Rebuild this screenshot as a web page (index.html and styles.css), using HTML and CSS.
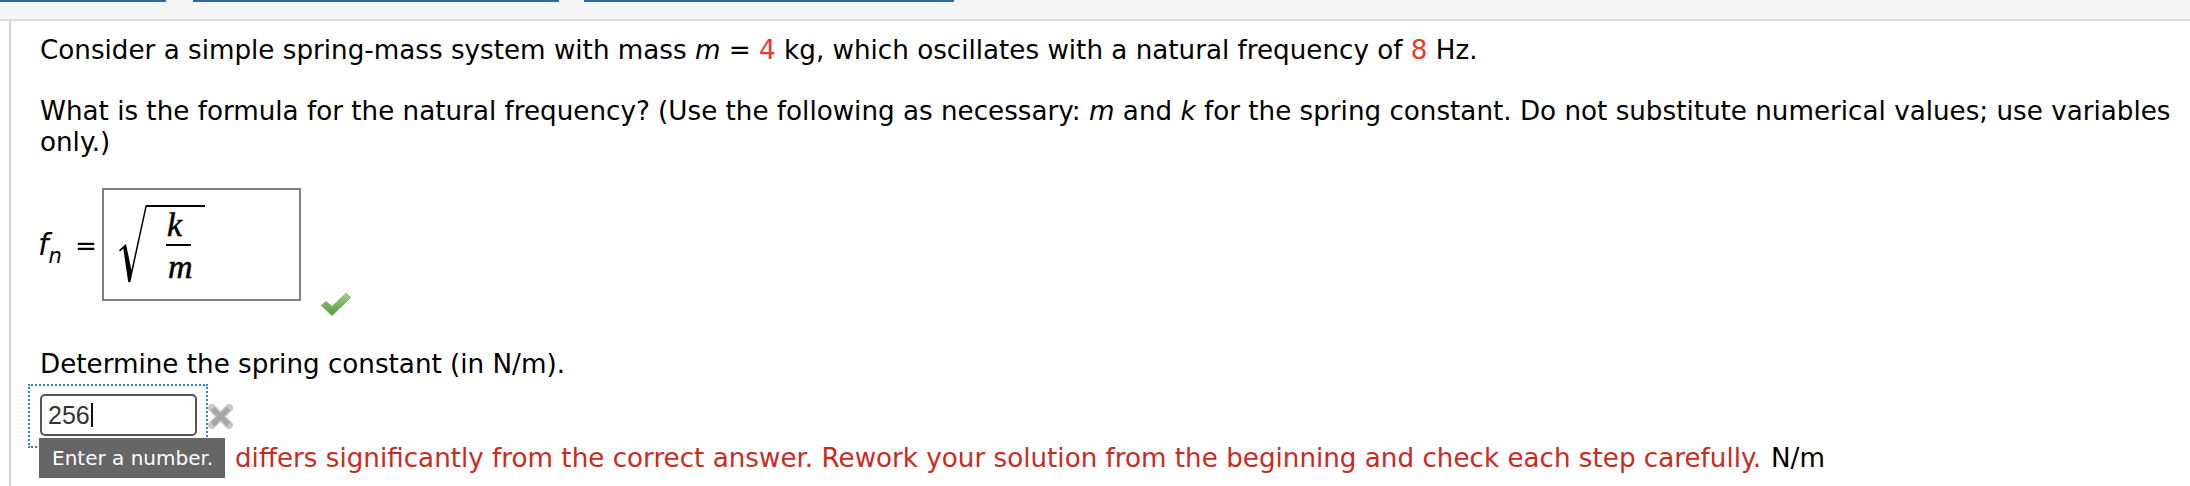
FILE: index.html
```html
<!DOCTYPE html>
<html lang="en">
<head>
<meta charset="utf-8">
<title>Spring-mass system</title>
<link rel="stylesheet" href="styles.css">
</head>
<body>
<div class="topbar">
  <div class="tabs"><span class="tab t1"></span><span class="tab t2"></span><span class="tab t3"></span></div>
</div>
<div class="content">
  <p class="line">Consider a simple spring-mass system with mass <i>m</i> = <span class="given">4</span> kg, which oscillates with a natural frequency of <span class="given">8</span> Hz.</p>
  <p class="line q2">What is the formula for the natural frequency? (Use the following as necessary: <i>m</i> and <i>k</i> for the spring constant. Do not substitute numerical values; use variables<br>only.)</p>

  <div class="answer-row">
    <span class="fn"><i>f</i><sub>n</sub></span>
    <span class="eq">=</span>
    <div class="mathbox">
      <svg class="radical" width="28" height="77" viewBox="0 0 28 77"><path d="M0 45 L7 39 L12.4 65 L26.6 0 L28 0 L28 2.2 L27.6 2.2 L11.4 77 L9.2 77 L4.3 43.5 L1 46.5 Z" fill="#000"/></svg>
      <div class="radicand">
        <div class="frac"><span class="fr-num">k</span><span class="fr-bar"></span><span class="fr-den">m</span></div>
      </div>
    </div>
    <svg class="check" width="30" height="23" viewBox="0 0 30 23">
      <defs><linearGradient id="cg" x1="0" y1="0" x2="0" y2="1"><stop offset="0" stop-color="#a3d487"/><stop offset="1" stop-color="#4f9a3f"/></linearGradient></defs>
      <path d="M0.5 12.5 L5 8.5 L11 13.5 L25 0.5 L29.5 4.5 L11 22.5 Z" fill="url(#cg)" stroke="#5f9f4c" stroke-width="0.8" stroke-linejoin="round"/>
    </svg>
  </div>

  <p class="line det">Determine the spring constant (in N/m).</p>
  <div class="input-row">
    <div class="focus-ring">
      <div class="field"><span class="val">256</span><span class="caret"></span></div>
    </div>
    <svg class="wrong" width="25" height="25" viewBox="0 0 25 25">
      <path d="M4 4 L21 21 M21 4 L4 21" stroke="#c9c9c9" stroke-width="8" stroke-linecap="round"/>
      <path d="M4.5 4.5 L20.5 20.5 M20.5 4.5 L4.5 20.5" stroke="#a6a6a6" stroke-width="5"/>
    </svg>
  </div>
  <div class="feedback-row">
    <span class="tip">Enter a number.</span>
    <span class="feedback">differs significantly from the correct answer. Rework your solution from the beginning and check each step carefully.</span>
    <span class="unit">N/m</span>
  </div>
</div>
</body>
</html>
```
FILE: styles.css
```css
html, body {
  margin: 0;
  padding: 0;
  background: #fff;
}
body {
  width: 2190px;
  height: 486px;
  overflow: hidden;
  font-family: "DejaVu Sans", sans-serif;
  font-size: 26.2px;
  line-height: 31px;
  color: #000;
}
.topbar {
  height: 19px;
  background: #f5f5f5;
  border-bottom: 2px solid #dcdcdc;
}
.tabs {
  display: flex;
}
.tab {
  display: block;
  height: 2px;
  background: #2f66a3;
}
.t1 { width: 166px; }
.t2 { width: 366px; margin-left: 27px; }
.t3 { width: 370px; margin-left: 25px; }

.content {
  margin-left: 9px;
  border-left: 2px solid #d0d0d0;
  padding: 14px 0 0 29px;
  height: 465px;
  box-sizing: border-box;
}
.line {
  margin: 0;
  white-space: nowrap;
}
.q2 {
  margin-top: 30px;
}
.given {
  color: #e8392b;
}

.answer-row {
  display: flex;
  align-items: center;
  margin-top: 30px;
}
.fn {
  margin-left: -2px;
  width: 37px;
  font-size: 30px;
  line-height: 31px;
}
.fn sub {
  font-size: 21px;
  font-style: italic;
  vertical-align: -8px;
  line-height: 0;
}
.eq {
  width: 27px;
  margin-top: 4px;
}
.mathbox {
  width: 199px;
  height: 113px;
  box-sizing: border-box;
  border: 2px solid #808080;
  padding: 15px 0 0 15px;
  display: flex;
  align-items: flex-start;
}
.radical {
  display: block;
  flex: none;
}
.radicand {
  border-top: 2px solid #000;
  padding: 5px 12px 0 19px;
}
.frac {
  display: flex;
  flex-direction: column;
  align-items: flex-start;
  font-family: "Liberation Serif", serif;
  font-style: italic;
  font-size: 34px;
  line-height: 26px;
  -webkit-text-stroke: 0.5px #000;
}
.fr-num {
  padding-left: 1px;
}
.fr-bar {
  display: block;
  width: 25px;
  height: 2px;
  background: #000;
  margin: 6px 0 8px;
}
.fr-den {
  padding-left: 2px;
}
.check {
  align-self: flex-end;
  margin: 0 0 -15px 20px;
}

.det {
  margin-top: 48px;
}
.input-row {
  display: flex;
  align-items: flex-start;
  margin-top: 4px;
  margin-left: -12px;
}
.focus-ring {
  border: 2px dotted #3a7dd8;
  padding: 8px 9px 10px 10px;
}
.field {
  width: 157px;
  height: 42px;
  box-sizing: border-box;
  border: 2px solid #555;
  border-radius: 5px;
  padding-left: 6px;
  display: flex;
  align-items: center;
  font-family: "Liberation Sans", Arial, sans-serif;
  font-size: 25px;
  color: #333;
}
.caret {
  display: block;
  width: 2px;
  height: 24px;
  background: #111;
  margin-left: 1px;
}
.wrong {
  display: block;
  margin-top: 20px;
}
.feedback-row {
  display: flex;
  align-items: center;
  margin-top: -10px;
  white-space: nowrap;
}
.tip {
  display: flex;
  align-items: center;
  box-sizing: border-box;
  width: 186px;
  height: 40px;
  margin-left: -1px;
  padding-left: 13px;
  background: #666;
  color: #fff;
  font-size: 20px;
}
.feedback {
  margin-left: 10px;
  color: #cc2a1f;
}
.unit {
  margin-left: 10px;
}
```
